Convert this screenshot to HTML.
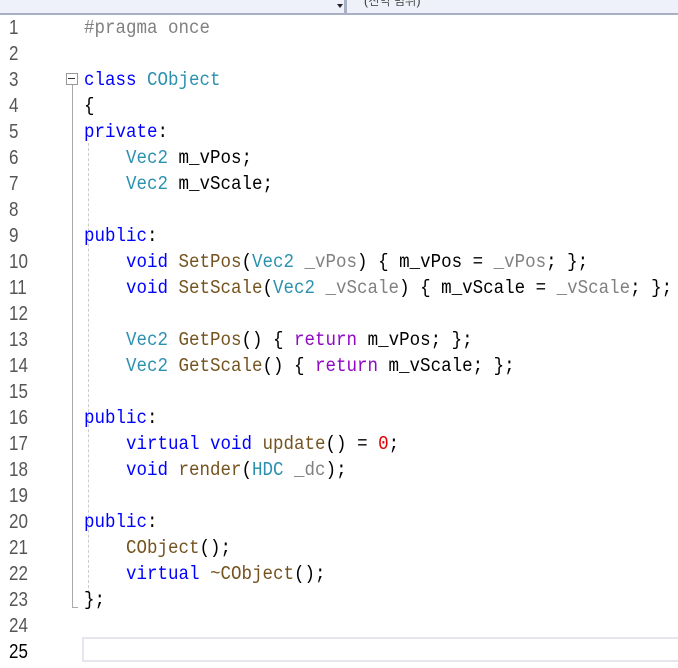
<!DOCTYPE html>
<html><head><meta charset="utf-8"><style>
body{margin:0;width:678px;height:668px;background:#fff;overflow:hidden;position:relative;font-family:"Liberation Mono",monospace;}
.hdr{position:absolute;left:0;top:0;width:678px;height:13px;background:#eef1f9;border-bottom:2px solid #a8b0c4;}
.hdr .sep{position:absolute;left:344px;top:0;width:3px;height:13px;background:#a8b0c4;}
.hdr .t{position:absolute;left:364px;top:-6px;font:12px "Liberation Sans","NanumGothic",sans-serif;color:#333;}
.hdr .a{position:absolute;left:337px;top:4px;width:0;height:0;border-left:3px solid transparent;border-right:3px solid transparent;border-top:4px solid #222;}
.ln{position:absolute;left:9px;width:30px;font:20px "Liberation Sans",sans-serif;color:#555;transform:scaleX(0.85);transform-origin:left;line-height:26px;}
.c{position:absolute;left:84px;font-size:19px;white-space:pre;color:#000;line-height:26px;transform:scaleX(0.921);transform-origin:left top;}
.k{color:#0000ff}.t2{color:#2b91af}.g{color:#808080}.f{color:#74531f}.r{color:#8f08c4}.n{color:#e00000}
</style></head><body>
<div class="hdr"><div class="a"></div><div class="sep"></div><div class="t">(전역 범위)</div></div>
<div id="lns"></div>
<div style="position:absolute;left:66px;top:73px;width:10px;height:10px;border:1px solid #999;background:#fff"></div>
<div style="position:absolute;left:68px;top:78px;width:7px;height:1px;background:#333"></div>
<div style="position:absolute;left:72px;top:85px;width:1px;height:523px;background:#aaa"></div>
<div style="position:absolute;left:72px;top:607px;width:6px;height:1px;background:#aaa"></div>
<div style="position:absolute;left:88px;top:143px;height:450px;border-left:1px dashed #ccc"></div>
<div style="position:absolute;left:82px;top:637px;width:600px;height:21px;border:2px solid #e6e6ee;border-right:none"></div>
<div class="c" style="top:15px"><span class="g">#pragma once</span>

<span class="k">class</span> <span class="t2">CObject</span>
{
<span class="k">private</span>:
    <span class="t2">Vec2</span> m_vPos;
    <span class="t2">Vec2</span> m_vScale;

<span class="k">public</span>:
    <span class="k">void</span> <span class="f">SetPos</span>(<span class="t2">Vec2</span> <span class="g">_vPos</span>) { m_vPos = <span class="g">_vPos</span>; };
    <span class="k">void</span> <span class="f">SetScale</span>(<span class="t2">Vec2</span> <span class="g">_vScale</span>) { m_vScale = <span class="g">_vScale</span>; };

    <span class="t2">Vec2</span> <span class="f">GetPos</span>() { <span class="r">return</span> m_vPos; };
    <span class="t2">Vec2</span> <span class="f">GetScale</span>() { <span class="r">return</span> m_vScale; };

<span class="k">public</span>:
    <span class="k">virtual</span> <span class="k">void</span> <span class="f">update</span>() = <span class="n">0</span>;
    <span class="k">void</span> <span class="f">render</span>(<span class="t2">HDC</span> <span class="g">_dc</span>);

<span class="k">public</span>:
    <span class="f">CObject</span>();
    <span class="k">virtual</span> <span class="f">~CObject</span>();
};</div>
<script>
var h='';for(var i=1;i<=25;i++){h+='<div class="ln" style="top:'+(15+(i-1)*26)+'px;'+(i==25?'color:#000':'')+'">'+i+'</div>';}
document.getElementById('lns').innerHTML=h;
</script>
</body></html>
